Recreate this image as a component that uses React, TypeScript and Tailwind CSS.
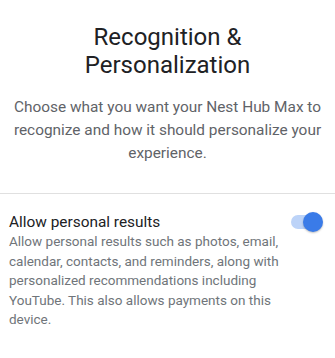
import React from 'react';

const Toggle: React.FC<{ on?: boolean }> = ({ on = true }) => (
  <div className="relative w-[32px] h-[20px] shrink-0 flex items-center">
    <div className={`w-[31px] h-[14px] rounded-full ${on ? 'bg-[#bcd3f8]' : 'bg-[#bdc1c6]'}`} />
    <div
      className={`absolute top-0 ${on ? 'right-0 bg-[#3a7be8]' : 'left-0 bg-white'} w-[20px] h-[20px] rounded-full shadow-[0_1px_2px_rgba(0,0,0,0.25)]`}
    />
  </div>
);

const App: React.FC = () => {
  return (
    <div className="w-[335px] h-[358px] overflow-hidden bg-white font-['Roboto',sans-serif]">
      {/* Header */}
      <header className="pt-[23px] px-[8px] text-center">
        <h1 className="text-[24px] leading-[28px] text-[#202124] font-normal">
          Recognition &amp;
          <br />
          Personalization
        </h1>
        <p className="mt-[17px] text-[15.4px] leading-[23px] text-[#5f6368]">
          Choose what you want your Nest Hub Max to recognize and how it should personalize your experience.
        </p>
      </header>

      <div className="mt-[28px] border-t border-[#e0e0e0]" />

      {/* Settings */}
      <section className="pl-[9px] pr-[12px] pt-[18px]">
        <div className="flex items-start justify-between gap-3">
          <h2 className="text-[15.4px] leading-[20px] text-[#202124]">Allow personal results</h2>
          <Toggle />
        </div>
        <p className="w-[290px] text-[13.5px] leading-[19.5px] text-[#70757a]">
          Allow personal results such as photos, email, calendar, contacts, and reminders, along with personalized recommendations including YouTube. This also allows payments on this device.
        </p>
      </section>
    </div>
  );
};

export default App;
